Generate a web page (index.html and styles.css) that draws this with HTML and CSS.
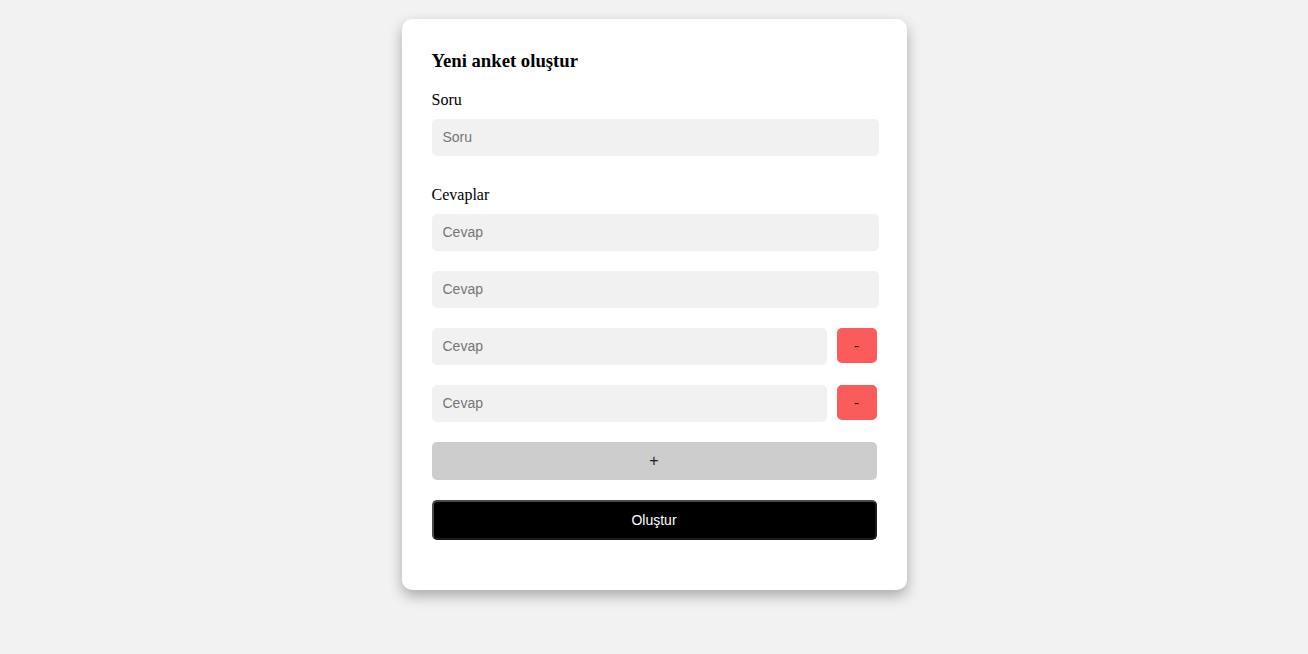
FILE: index.html
```
<!DOCTYPE html>
<html lang="tr">

<head>
    <meta charset="UTF-8">
    <meta name="viewport" content="width=device-width, initial-scale=1.0">
    <title>Yeni anket</title>
    <link rel="stylesheet" href="styles.css">
</head>

<body>
    <div class="PollBox">
        <h3 class="PollTitle">Yeni anket oluştur</h3>
        <label class="PollLabel">Soru</label>
        <input class="PollInput Wide QuestionInput" type="text" placeholder="Soru">
        <label class="PollLabel">Cevaplar</label>
        <div class="AnswerList">
            <div class="AnswerRow">
                <input class="PollInput Wide" type="text" placeholder="Cevap">
            </div>
            <div class="AnswerRow">
                <input class="PollInput Wide" type="text" placeholder="Cevap">
            </div>
            <div class="AnswerRow">
                <input class="PollInput" type="text" placeholder="Cevap">
                <button class="RemoveBtn">-</button>
            </div>
            <div class="AnswerRow">
                <input class="PollInput" type="text" placeholder="Cevap">
                <button class="RemoveBtn">-</button>
            </div>
        </div>
        <button class="AddBtn">+</button>
        <button class="CreateBtn">Oluştur</button>
    </div>
</body>

</html>
```

FILE: styles.css
```
body {
    margin: 0;
    padding: 19px 0 60px;
    min-height: 100vh;
    box-sizing: border-box;
    background-color: #f2f2f2;
    font-family: "Liberation Serif", "Times New Roman", serif;
}

.PollBox {
    width: 445px;
    margin: 0 auto;
    padding: 31px 30px 50px;
    background-color: white;
    border-radius: 10px;
    box-shadow: 0 6px 14px rgba(0, 0, 0, 0.3);
    display: flex;
    flex-direction: column;
}

.PollTitle {
    margin: 0 0 20px;
    font-size: 18.72px;
    font-weight: bold;
    line-height: 21px;
}

.PollLabel {
    display: block;
    font-size: 16px;
    line-height: 18px;
    margin-bottom: 10px;
}

.PollInput {
    box-sizing: border-box;
    height: 37px;
    flex: 1;
    min-width: 0;
    padding: 0 11px 1px;
    border: none;
    border-radius: 5px;
    background-color: #f1f1f1;
    font-family: "Liberation Sans", Arial, sans-serif;
    font-size: 14px;
    color: #222;
    outline: none;
}

.PollInput::placeholder {
    color: #757575;
}

.PollInput.Wide {
    flex: none;
    width: calc(100% + 2px);
}

.QuestionInput {
    margin-bottom: 30px;
}

.AnswerList {
    display: flex;
    flex-direction: column;
    gap: 20px;
    margin-bottom: 20px;
}

.AnswerRow {
    display: flex;
    align-items: flex-start;
    gap: 10px;
}

.RemoveBtn {
    width: 40px;
    height: 35px;
    flex-shrink: 0;
    border: none;
    border-radius: 5px;
    background-color: #fa5c5c;
    color: black;
    font-family: "Liberation Sans", Arial, sans-serif;
    font-size: 14px;
    cursor: pointer;
}

.AddBtn {
    height: 38px;
    margin-bottom: 20px;
    border: none;
    border-radius: 5px;
    background-color: #cccccc;
    color: #222;
    font-family: "Liberation Sans", Arial, sans-serif;
    font-size: 16px;
    font-weight: 300;
    cursor: pointer;
}

.CreateBtn {
    height: 40px;
    border: 2px solid;
    border-color: #4a4a4a #1a1a1a #1a1a1a #4a4a4a;
    border-radius: 5px;
    background-color: black;
    color: white;
    font-family: "Liberation Sans", Arial, sans-serif;
    font-size: 14px;
    cursor: pointer;
}
```
